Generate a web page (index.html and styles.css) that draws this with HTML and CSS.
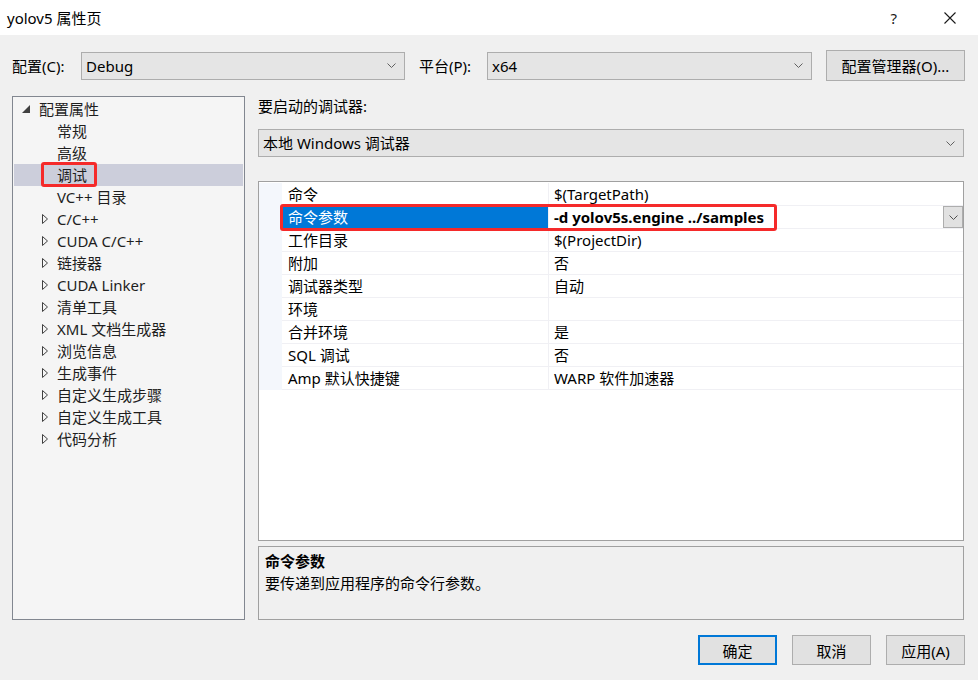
FILE: index.html
```html
<!DOCTYPE html>
<html lang="zh-CN">
<head>
  <meta charset="UTF-8">
  <title>yolov5 属性页</title>
  <link rel="stylesheet" href="styles.css">
</head>
<body>

  <div class="titlebar">
    <span class="title">yolov5 属性页</span>
    <span class="help">?</span>
    <svg class="close" width="12" height="12" viewBox="0 0 12 12">
      <path d="M0.5 0.5 L11.5 11.5 M11.5 0.5 L0.5 11.5" stroke="#1a1a1a" stroke-width="1.1" fill="none"/>
    </svg>
  </div>

  <div class="toolbar">
    <label class="lbl lbl-config">配置(C):</label>
    <div class="combo combo-config">
      <span class="combo-text">Debug</span>
      <svg class="chev" width="9" height="5" viewBox="0 0 9 5"><path d="M0.5 0.5 L4.5 4.5 L8.5 0.5" stroke="#606060" fill="none"/></svg>
    </div>
    <label class="lbl lbl-platform">平台(P):</label>
    <div class="combo combo-platform">
      <span class="combo-text">x64</span>
      <svg class="chev" width="9" height="5" viewBox="0 0 9 5"><path d="M0.5 0.5 L4.5 4.5 L8.5 0.5" stroke="#606060" fill="none"/></svg>
    </div>
    <button class="btn btn-manager">配置管理器(O)...</button>
  </div>

  <div class="main">
    <div class="tree">
      <div class="node root">
        <svg class="arrow" width="17" height="8" viewBox="0 0 17 8"><path d="M0 8 L8 8 L8 0 Z" fill="#404040"/></svg>配置属性
      </div>
      <div class="node leaf">常规</div>
      <div class="node leaf">高级</div>
      <div class="node leaf selected">调试</div>
      <div class="node leaf">VC++ 目录</div>
      <div class="node branch"><svg class="arrow" width="15" height="10" viewBox="0 0 15 10"><path d="M0.5 0.5 L5.5 5 L0.5 9.5 Z" stroke="#404040" fill="none"/></svg>C/C++</div>
      <div class="node branch"><svg class="arrow" width="15" height="10" viewBox="0 0 15 10"><path d="M0.5 0.5 L5.5 5 L0.5 9.5 Z" stroke="#404040" fill="none"/></svg>CUDA C/C++</div>
      <div class="node branch"><svg class="arrow" width="15" height="10" viewBox="0 0 15 10"><path d="M0.5 0.5 L5.5 5 L0.5 9.5 Z" stroke="#404040" fill="none"/></svg>链接器</div>
      <div class="node branch"><svg class="arrow" width="15" height="10" viewBox="0 0 15 10"><path d="M0.5 0.5 L5.5 5 L0.5 9.5 Z" stroke="#404040" fill="none"/></svg>CUDA Linker</div>
      <div class="node branch"><svg class="arrow" width="15" height="10" viewBox="0 0 15 10"><path d="M0.5 0.5 L5.5 5 L0.5 9.5 Z" stroke="#404040" fill="none"/></svg>清单工具</div>
      <div class="node branch"><svg class="arrow" width="15" height="10" viewBox="0 0 15 10"><path d="M0.5 0.5 L5.5 5 L0.5 9.5 Z" stroke="#404040" fill="none"/></svg>XML 文档生成器</div>
      <div class="node branch"><svg class="arrow" width="15" height="10" viewBox="0 0 15 10"><path d="M0.5 0.5 L5.5 5 L0.5 9.5 Z" stroke="#404040" fill="none"/></svg>浏览信息</div>
      <div class="node branch"><svg class="arrow" width="15" height="10" viewBox="0 0 15 10"><path d="M0.5 0.5 L5.5 5 L0.5 9.5 Z" stroke="#404040" fill="none"/></svg>生成事件</div>
      <div class="node branch"><svg class="arrow" width="15" height="10" viewBox="0 0 15 10"><path d="M0.5 0.5 L5.5 5 L0.5 9.5 Z" stroke="#404040" fill="none"/></svg>自定义生成步骤</div>
      <div class="node branch"><svg class="arrow" width="15" height="10" viewBox="0 0 15 10"><path d="M0.5 0.5 L5.5 5 L0.5 9.5 Z" stroke="#404040" fill="none"/></svg>自定义生成工具</div>
      <div class="node branch"><svg class="arrow" width="15" height="10" viewBox="0 0 15 10"><path d="M0.5 0.5 L5.5 5 L0.5 9.5 Z" stroke="#404040" fill="none"/></svg>代码分析</div>
      <div class="mark mark-node"></div>
    </div>

    <div class="content">
      <div class="debugger-label">要启动的调试器:</div>
      <div class="combo combo-debugger">
        <span class="combo-text">本地 Windows 调试器</span>
        <svg class="chev" width="9" height="5" viewBox="0 0 9 5"><path d="M0.5 0.5 L4.5 4.5 L8.5 0.5" stroke="#606060" fill="none"/></svg>
      </div>

      <div class="grid">
        <div class="row"><div class="gutter"></div><div class="name">命令</div><div class="value">$(TargetPath)</div></div>
        <div class="row active">
          <div class="gutter"></div><div class="name">命令参数</div>
          <div class="value"><span class="value-text">-d yolov5s.engine ../samples</span>
            <span class="drop"><svg width="9" height="5" viewBox="0 0 9 5"><path d="M0.5 0.5 L4.5 4.5 L8.5 0.5" stroke="#505050" fill="none"/></svg></span>
          </div>
        </div>
        <div class="row"><div class="gutter"></div><div class="name">工作目录</div><div class="value">$(ProjectDir)</div></div>
        <div class="row"><div class="gutter"></div><div class="name">附加</div><div class="value">否</div></div>
        <div class="row"><div class="gutter"></div><div class="name">调试器类型</div><div class="value">自动</div></div>
        <div class="row"><div class="gutter"></div><div class="name">环境</div><div class="value"></div></div>
        <div class="row"><div class="gutter"></div><div class="name">合并环境</div><div class="value">是</div></div>
        <div class="row"><div class="gutter"></div><div class="name">SQL 调试</div><div class="value">否</div></div>
        <div class="row"><div class="gutter"></div><div class="name">Amp 默认快捷键</div><div class="value">WARP 软件加速器</div></div>
        <div class="mark mark-row"></div>
      </div>

      <div class="desc">
        <div class="desc-title">命令参数</div>
        <div class="desc-text">要传递到应用程序的命令行参数。</div>
      </div>
    </div>
  </div>

  <div class="footer">
    <button class="btn btn-ok">确定</button>
    <button class="btn">取消</button>
    <button class="btn">应用(A)</button>
  </div>

</body>
</html>
```

FILE: styles.css
```css
body {
  margin: 0;
  width: 978px;
  height: 680px;
  background-color: #f0f0f0;
  color: #000;
  font-family: "Noto Sans", "Noto Sans CJK SC", sans-serif;
  font-size: 15px;
  overflow: hidden;
}
.titlebar {
  height: 35px;
  background-color: #fff;
  display: flex;
  align-items: center;
}
.title {
  flex: 1;
  padding-left: 7px;
  line-height: 20px;
}
.help {
  margin-right: 47px;
  line-height: 20px;
  color: #1a1a1a;
}
.close {
  margin-right: 22px;
}
.toolbar {
  display: flex;
  align-items: center;
  margin-top: 15px;
  padding-left: 12px;
  height: 31px;
}
.lbl {
  line-height: 20px;
}
.lbl-config {
  width: 69px;
}
.lbl-platform {
  width: 68px;
  margin-left: 14px;
}
.combo {
  box-sizing: border-box;
  height: 28px;
  background-color: #e5e5e5;
  border: 1px solid #adadad;
  display: flex;
  align-items: center;
  padding: 0 8px 0 4px;
}
.combo-text {
  flex: 1;
  line-height: 20px;
  white-space: nowrap;
}
.combo-config {
  width: 324px;
}
.combo-platform {
  width: 325px;
}
.btn {
  box-sizing: border-box;
  height: 31px;
  background-color: #e1e1e1;
  border: 1px solid #adadad;
  font-family: inherit;
  font-size: 15px;
  color: #000;
  padding: 0;
  margin: 0;
}
.btn-manager {
  width: 139px;
  margin-left: 14px;
}
.main {
  display: flex;
  margin-top: 15px;
  padding-left: 12px;
  height: 524px;
}
.tree {
  position: relative;
  box-sizing: border-box;
  width: 233px;
  height: 524px;
  background-color: #f5f5f5;
  border: 1px solid #828790;
  padding: 1px 1px 0 1px;
}
.node {
  height: 22px;
  line-height: 22px;
  color: #1e1e1e;
  white-space: nowrap;
  display: flex;
  align-items: center;
}
.root {
  padding-left: 8px;
}
.leaf {
  padding-left: 43px;
}
.branch {
  padding-left: 28px;
}
.arrow {
  flex: none;
}
.selected {
  background-color: #cccedb;
}
.mark {
  position: absolute;
  box-sizing: border-box;
  border: 3px solid #f52a2a;
  border-radius: 3px;
}
.mark-node {
  left: 28px;
  top: 65px;
  width: 56px;
  height: 25px;
}
.content {
  margin-left: 13px;
  width: 706px;
  display: flex;
  flex-direction: column;
}
.debugger-label {
  height: 20px;
  line-height: 20px;
}
.combo-debugger {
  margin-top: 13px;
  width: 706px;
}
.grid {
  position: relative;
  box-sizing: border-box;
  margin-top: 24px;
  height: 360px;
  background-color: #fff;
  border: 1px solid #a0a0a0;
  padding-top: 1px;
}
.row {
  display: flex;
  height: 23px;
  box-sizing: border-box;
  border-bottom: 1px solid #f0f0f4;
}
.gutter {
  width: 23px;
  background-color: #f4f7fc;
  margin-bottom: -1px;
}
.name {
  box-sizing: border-box;
  width: 267px;
  padding-left: 6px;
  line-height: 22px;
  border-right: 1px solid #f0f0f4;
  white-space: nowrap;
}
.value {
  flex: 1;
  display: flex;
  align-items: center;
  padding-left: 5px;
  line-height: 22px;
  white-space: nowrap;
}
.active .name {
  background-color: #0078d7;
  color: #fff;
}
.value-text {
  flex: 1;
  font-weight: bold;
}
.drop {
  box-sizing: border-box;
  width: 20px;
  height: 22px;
  background-color: #e1e1e1;
  border: 1px solid #adadad;
  display: flex;
  align-items: center;
  justify-content: center;
}
.mark-row {
  left: 21px;
  top: 22px;
  width: 497px;
  height: 27px;
}
.desc {
  box-sizing: border-box;
  margin-top: 5px;
  height: 74px;
  border: 1px solid #a0a0a0;
  padding: 3px 6px 0;
}
.desc-title {
  font-weight: bold;
  line-height: 22px;
}
.desc-text {
  line-height: 22px;
}
.footer {
  display: flex;
  justify-content: flex-end;
  gap: 15px;
  margin-top: 15px;
  padding-right: 13px;
}
.footer .btn {
  width: 79px;
  height: 30px;
}
.btn-ok {
  border: 2px solid #0078d7;
}
```
